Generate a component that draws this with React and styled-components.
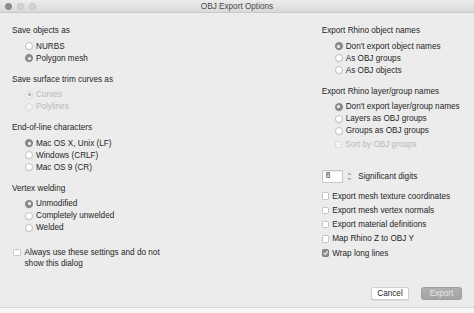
import React from "react";
import styled, { createGlobalStyle, css } from "styled-components";

const Global = createGlobalStyle`
  html, body { margin: 0; padding: 0; background: #f7f7f7; }
  body { font-family: "Liberation Sans", Arial, sans-serif; -webkit-font-smoothing: antialiased; }
`;

const Window = styled.div`
  width: 474px;
  height: 308px;
  background: #ececec;
  display: flex;
  flex-direction: column;
  box-sizing: border-box;
  border-bottom: 1px solid #d6d6d6;
  font-size: 8.2px;
  color: #262626;
`;

const TitleBar = styled.div`
  height: 13px;
  flex: 0 0 13px;
  box-sizing: border-box;
  background: linear-gradient(#ececec, #d9d9d9);
  border-bottom: 1px solid #c9c9c9;
  display: flex;
  align-items: center;
  position: relative;
  padding-left: 5px;
  gap: 5px;
`;

const Light = styled.span`
  width: 7px;
  height: 7px;
  border-radius: 50%;
  box-sizing: border-box;
  background: ${(p) => (p.$active ? "#8f8f8f" : "#d3d3d3")};
  border: 0.5px solid ${(p) => (p.$active ? "#7d7d7d" : "#c3c3c3")};
`;

const Title = styled.div`
  position: absolute;
  left: 0;
  right: 0;
  top: 0;
  bottom: 0;
  display: flex;
  align-items: center;
  justify-content: center;
  color: #4a4a4a;
  font-size: 8.2px;
  pointer-events: none;
`;

const Content = styled.div`
  flex: 1;
  display: flex;
  padding: 12px 12px 0 12px;
`;

const LeftCol = styled.div`
  flex: 0 0 309.7px;
  display: flex;
  flex-direction: column;
  gap: 9.5px;
`;

const RightCol = styled.div`
  flex: 1;
  display: flex;
  flex-direction: column;
`;

const Group = styled.div`
  display: flex;
  flex-direction: column;
  margin-top: ${(p) => p.$mt || 0}px;
`;

const Heading = styled.div`
  height: 12px;
  line-height: 12px;
  white-space: nowrap;
`;

const List = styled.div`
  display: flex;
  flex-direction: column;
  padding-left: 13px;
  margin-top: 3px;
`;

const Row = styled.label`
  height: ${(p) => p.$h || 12}px;
  display: flex;
  align-items: center;
  gap: 3px;
  white-space: nowrap;
  color: ${(p) => (p.$disabled ? "#b9b9b9" : "#262626")};
`;

const RadioDot = styled.span`
  width: 8px;
  height: 8px;
  border-radius: 50%;
  box-sizing: border-box;
  flex: 0 0 8px;
  position: relative;
  background: #ffffff;
  border: 0.5px solid #c2c2c2;
  box-shadow: 0 0.5px 0.5px rgba(0,0,0,0.08);
  ${(p) =>
    p.$on &&
    css`
      background: #8e8e8e;
      border-color: #7f7f7f;
      &::after {
        content: "";
        position: absolute;
        left: 50%;
        top: 50%;
        width: 3px;
        height: 3px;
        margin: -1.5px 0 0 -1.5px;
        border-radius: 50%;
        background: #f4f4f4;
      }
    `}
  ${(p) =>
    p.$disabled &&
    css`
      background: #f3f3f3;
      border-color: #d9d9d9;
      box-shadow: none;
      &::after {
        background: ${p.$on ? "#a9a9a9" : "transparent"};
      }
    `}
`;

const Box = styled.span`
  width: 7.5px;
  height: 7.5px;
  flex: 0 0 7.5px;
  box-sizing: border-box;
  border-radius: 1.5px;
  background: ${(p) => (p.$on ? "#8e8e8e" : p.$disabled ? "#f3f3f3" : "#ffffff")};
  border: 0.5px solid ${(p) => (p.$on ? "#7f7f7f" : p.$disabled ? "#dadada" : "#c2c2c2")};
  display: flex;
  align-items: center;
  justify-content: center;
`;

const CheckRow = styled.label`
  display: flex;
  align-items: center;
  height: ${(p) => p.$h || 12}px;
  gap: 3px;
  white-space: nowrap;
  color: ${(p) => (p.$disabled ? "#b9b9b9" : "#262626")};
`;

const AlwaysRow = styled.label`
  display: flex;
  align-items: flex-start;
  gap: 4px;
  margin-top: 3.5px;
  padding-left: 1px;
  line-height: 11px;
  & > span:first-child {
    margin-top: 2px;
  }
`;

const AlwaysText = styled.span`
  max-width: 142px;
`;

const DigitsRow = styled.div`
  display: flex;
  align-items: center;
  height: 13px;
  margin-top: 19.5px;
`;

const NumField = styled.div`
  width: 21px;
  height: 13px;
  box-sizing: border-box;
  background: #ffffff;
  border: 1px solid #c6c6c6;
  box-shadow: inset 0 0.5px 1px rgba(0,0,0,0.12);
  padding-left: 3px;
  display: flex;
  align-items: center;
  line-height: 1;
`;

const Stepper = styled.span`
  width: 5px;
  height: 11px;
  margin-left: 4.5px;
  margin-right: 6px;
  display: flex;
`;

const CheckList = styled.div`
  display: flex;
  flex-direction: column;
  margin-top: 6px;
`;

const Footer = styled.div`
  display: flex;
  justify-content: flex-end;
  gap: 12px;
  padding: 0 12px 7.5px 0;
`;

const Button = styled.div`
  height: 12.5px;
  box-sizing: border-box;
  width: ${(p) => p.$w}px;
  border-radius: 2.5px;
  display: flex;
  align-items: center;
  justify-content: center;
  font-size: 8.2px;
  ${(p) =>
    p.$primary
      ? css`
          background: linear-gradient(#b0b0b0, #a4a4a4);
          color: #e8e8e8;
          border: 0.5px solid #9d9d9d;
        `
      : css`
          background: #ffffff;
          color: #262626;
          border: 0.5px solid #cfcfcf;
          box-shadow: 0 0.5px 0.5px rgba(0,0,0,0.15);
        `}
`;

const Radio = ({ on, disabled, children }) => (
  <Row $disabled={disabled}>
    <RadioDot $on={on} $disabled={disabled} />
    <span>{children}</span>
  </Row>
);

const Check = ({ on, disabled, h, children }) => (
  <CheckRow $disabled={disabled} $h={h}>
    <Box $on={on} $disabled={disabled}>
      {on && (
        <svg width="6" height="6" viewBox="0 0 6 6">
          <path d="M1 3.2 L2.4 4.6 L5 1.2" stroke="#f4f4f4" strokeWidth="1.1" fill="none" strokeLinecap="round" strokeLinejoin="round" />
        </svg>
      )}
    </Box>
    <span>{children}</span>
  </CheckRow>
);

const RadioGroup = ({ title, items, selected, disabled, mt }) => (
  <Group $mt={mt}>
    <Heading>{title}</Heading>
    <List>
      {items.map((it, i) => (
        <Radio key={it} on={i === selected} disabled={disabled}>
          {it}
        </Radio>
      ))}
    </List>
  </Group>
);

export default function App() {
  return (
    <>
      <Global />
      <Window>
        <TitleBar>
          <Light $active />
          <Light />
          <Light />
          <Title>OBJ Export Options</Title>
        </TitleBar>
        <Content>
          <LeftCol>
            <RadioGroup title="Save objects as" items={["NURBS", "Polygon mesh"]} selected={1} />
            <RadioGroup title="Save surface trim curves as" items={["Curves", "Polylines"]} selected={0} disabled />
            <RadioGroup
              title="End-of-line characters"
              items={["Mac OS X, Unix (LF)", "Windows (CRLF)", "Mac OS 9 (CR)"]}
              selected={0}
            />
            <RadioGroup title="Vertex welding" items={["Unmodified", "Completely unwelded", "Welded"]} selected={0} />
            <AlwaysRow>
              <Box />
              <AlwaysText>Always use these settings and do not show this dialog</AlwaysText>
            </AlwaysRow>
          </LeftCol>
          <RightCol>
            <RadioGroup
              title="Export Rhino object names"
              items={["Don't export object names", "As OBJ groups", "As OBJ objects"]}
              selected={0}
            />
            <RadioGroup
              mt={9.5}
              title="Export Rhino layer/group names"
              items={["Don't export layer/group names", "Layers as OBJ groups", "Groups as OBJ groups"]}
              selected={0}
            />
            <List style={{ marginTop: 2 }}>
              <Check disabled>Sort by OBJ groups</Check>
            </List>
            <DigitsRow>
              <NumField>8</NumField>
              <Stepper>
                <svg width="5" height="11" viewBox="0 0 5 11">
                  <path d="M1 4 L2.5 2.3 L4 4" stroke="#6a6a6a" strokeWidth="0.8" fill="none" />
                  <path d="M1 7 L2.5 8.7 L4 7" stroke="#6a6a6a" strokeWidth="0.8" fill="none" />
                </svg>
              </Stepper>
              <span>Significant digits</span>
            </DigitsRow>
            <CheckList>
              <Check h={14.25}>Export mesh texture coordinates</Check>
              <Check h={14.25}>Export mesh vertex normals</Check>
              <Check h={14.25}>Export material definitions</Check>
              <Check h={14.25}>Map Rhino Z to OBJ Y</Check>
              <Check h={14.25} on>
                Wrap long lines
              </Check>
            </CheckList>
          </RightCol>
        </Content>
        <Footer>
          <Button $w={38}>Cancel</Button>
          <Button $w={41} $primary>
            Export
          </Button>
        </Footer>
      </Window>
    </>
  );
}
